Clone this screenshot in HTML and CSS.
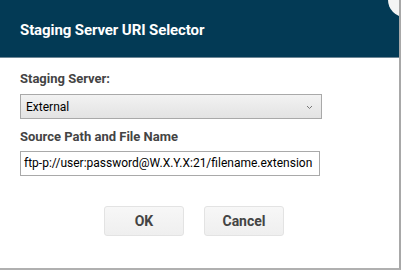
FILE: index.html
```html
<!DOCTYPE html>
<html>
<head>
<meta charset="utf-8">
<link rel="stylesheet" href="styles.css">
</head>
<body>
<div class="dialog">
  <div class="header">
    <h1 class="title">Staging Server URI Selector</h1>
  </div>
  <div class="body">
    <label class="label">Staging Server:</label>
    <div class="select">
      <span class="select-text">External</span>
      <svg class="chevron" width="7" height="5" viewBox="0 0 7 5"><path d="M1 1 L3.5 3.5 L6 1" fill="none" stroke="#777" stroke-width="1"/></svg>
    </div>
    <label class="label label2">Source Path and File Name</label>
    <div class="input">ftp-p://user:password@W.X.Y.X:21/filename.extension</div>
    <div class="buttons">
      <button class="btn">OK</button>
      <button class="btn">Cancel</button>
    </div>
  </div>
  <div class="close"></div>
</div>
</body>
</html>
```

FILE: styles.css
```css
html, body {
  margin: 0;
  padding: 0;
  background: #ffffff;
  overflow: hidden;
}
.dialog {
  position: relative;
  width: 399px;
  height: 268px;
  border-right: 2px solid #a8a8a8;
  border-bottom: 2px solid #b0b0b0;
  background: #ffffff;
  font-family: Roboto, "Liberation Sans", Arial, sans-serif;
  overflow: hidden;
}
.header {
  height: 57px;
  background: #033a55;
  border-bottom: 1px solid #6e8796;
  display: flex;
  align-items: center;
  padding-left: 20px;
}
.title {
  margin: 0;
  padding-top: 2px;
  font-size: 15px;
  font-weight: 700;
  color: #ffffff;
  letter-spacing: -0.1px;
}
.body {
  padding: 13px 20px 0 20px;
  display: flex;
  flex-direction: column;
}
.label {
  font-size: 13px;
  font-weight: 700;
  color: #444444;
  line-height: 16px;
  height: 16px;
}
.label2 {
  margin-top: 10px;
}
.select {
  margin-top: 7px;
  height: 23px;
  border: 1px solid #a9a9a9;
  background: linear-gradient(#f2f2f2, #e3e3e3);
  display: flex;
  align-items: center;
  justify-content: space-between;
  padding: 0 8px 0 5px;
  box-sizing: content-box;
  width: 287px;
}
.select-text {
  font-size: 12px;
  color: #000000;
}
.chevron {
  margin-top: 1px;
}
.input {
  margin-top: 6px;
  width: 295px;
  height: 23px;
  border: 1px solid #a9a9a9;
  padding-left: 3px;
  font-size: 12px;
  line-height: 22px;
  color: #000000;
  white-space: nowrap;
  overflow: hidden;
}
.buttons {
  margin-top: 30px;
  display: flex;
  justify-content: center;
  gap: 20px;
  padding-right: 11px;
}
.btn {
  width: 80px;
  height: 30px;
  border: 1px solid #e3e3e3;
  border-radius: 3px;
  background: linear-gradient(#f7f7f7, #efefef);
  font-family: Roboto, "Liberation Sans", Arial, sans-serif;
  font-size: 14px;
  font-weight: 700;
  color: #444444;
  padding: 0;
}
.close {
  position: absolute;
  top: -17px;
  left: 388px;
  width: 34px;
  height: 34px;
  border-radius: 50%;
  background: #f4f4f4;
}
```
